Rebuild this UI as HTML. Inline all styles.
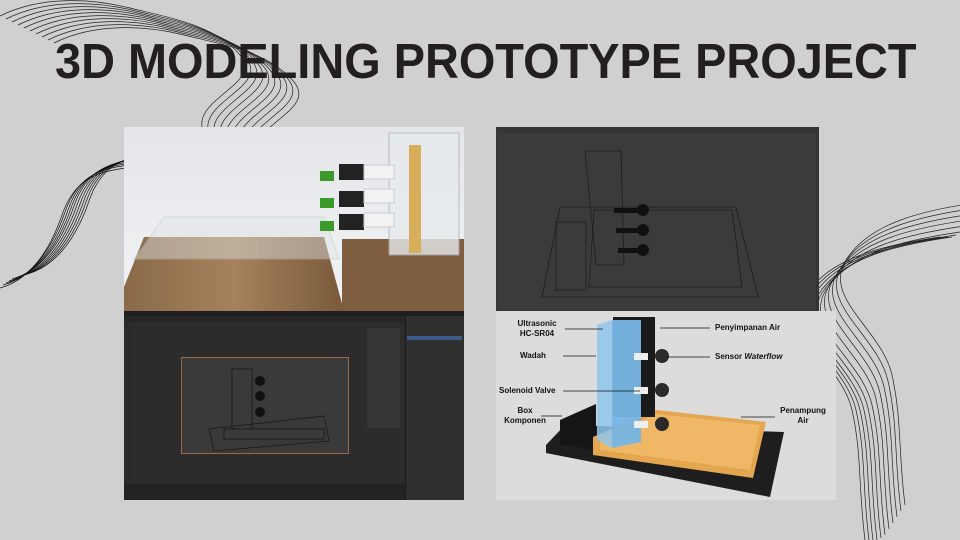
<!DOCTYPE html>
<html><head><meta charset="utf-8"><style>
body{margin:0;width:960px;height:540px;overflow:hidden;background:#d0d0d0;position:relative;font-family:"Liberation Sans",sans-serif}
.abs{position:absolute}
h1{position:absolute;left:55px;top:36px;margin:0;font-size:49px;font-weight:bold;color:#231f20;letter-spacing:0;white-space:nowrap;line-height:52px;transform:scaleX(0.957);transform-origin:0 0}
.lbl{position:absolute;font-size:8px;font-weight:bold;color:#111;text-align:center;line-height:10px;white-space:nowrap}
</style></head><body>
<svg class="abs" style="left:0;top:0" width="960" height="540">
<defs>
<path id="a" d="M0,16 C40,-4 90,-2 130,8 S215,25 240,55 S185,100 205,135" fill="none" stroke="#222" stroke-width="0.7"/>
<path id="b" d="M0,288 C30,280 50,250 62,215 S95,172 126,168" fill="none" stroke="#111" stroke-width="0.7"/>
<path id="c" d="M960,232 C905,240 850,252 826,290 S862,360 872,405 S878,480 885,535" fill="none" stroke="#222" stroke-width="0.7"/>
</defs>
<g><use href="#a"/><use href="#a" x="6" y="3"/><use href="#a" x="12" y="6"/><use href="#a" x="18" y="9"/><use href="#a" x="24" y="12"/><use href="#a" x="30" y="15"/><use href="#a" x="36" y="18"/><use href="#a" x="42" y="21"/><use href="#a" x="48" y="24"/><use href="#a" x="54" y="27"/></g>
<g><use href="#b"/><use href="#b" x="3" y="-3"/><use href="#b" x="6" y="-5"/><use href="#b" x="9" y="-7"/><use href="#b" x="12" y="-9"/><use href="#b" x="15" y="-10"/><use href="#b" x="18" y="-11"/><use href="#b" x="21" y="-12"/><use href="#b" x="24" y="-13"/><use href="#b" x="27" y="-14"/></g>
<g><use href="#c"/><use href="#c" x="-4" y="3"/><use href="#c" x="-8" y="5"/><use href="#c" x="-12" y="5"/><use href="#c" x="-16" y="5"/><use href="#c" x="4" y="-6"/><use href="#c" x="8" y="-12"/><use href="#c" x="12" y="-18"/><use href="#c" x="16" y="-24"/><use href="#c" x="20" y="-30"/><use href="#c" x="-20" y="5"/></g>
</svg>
<h1>3D MODELING PROTOTYPE PROJECT</h1>

<svg class="abs" style="left:124px;top:127px" width="340" height="184">
<defs><linearGradient id="wall" x1="0" y1="0" x2="0" y2="1"><stop offset="0" stop-color="#e4e6ea"/><stop offset="1" stop-color="#f2f3f5"/></linearGradient>
<linearGradient id="wood" x1="0" y1="0" x2="1" y2="0"><stop offset="0" stop-color="#8a6a48"/><stop offset=".5" stop-color="#a5825c"/><stop offset="1" stop-color="#7a5a3a"/></linearGradient></defs>
<rect width="340" height="184" fill="url(#wall)"/>
<polygon points="0,160 20,110 200,110 220,184 0,184" fill="url(#wood)"/>
<rect x="218" y="112" width="122" height="72" fill="#7e5e3e"/>
<polygon points="10,132 40,90 200,90 215,132" fill="#dfe4e6" opacity=".45" stroke="#b8c0c4"/>
<rect x="265" y="6" width="70" height="122" fill="#e6ebee" opacity=".8" stroke="#aab" />
<rect x="285" y="18" width="12" height="108" fill="#d8ae5a"/>
<g fill="#222"><rect x="215" y="37" width="25" height="16"/><rect x="215" y="64" width="25" height="16"/><rect x="215" y="87" width="25" height="16"/></g>
<g fill="#3a9a2a"><rect x="196" y="44" width="14" height="10"/><rect x="196" y="71" width="14" height="10"/><rect x="196" y="94" width="14" height="10"/></g>
<g fill="#f2f2f2" stroke="#ccc"><rect x="240" y="38" width="30" height="14"/><rect x="240" y="62" width="30" height="14"/><rect x="240" y="86" width="30" height="14"/></g>
</svg>

<div class="abs" style="left:124px;top:311px;width:340px;height:189px;background:#2c2c2c;overflow:hidden">
 <div class="abs" style="left:0;top:0;width:340px;height:5px;background:#1e1e1e"></div>
 <div class="abs" style="left:0;top:5px;width:340px;height:6px;background:#262626"></div>
 <div class="abs" style="left:0;top:11px;width:8px;height:160px;background:#2a2a2a"></div>
 <div class="abs" style="left:57px;top:46px;width:166px;height:95px;background:#3a3a3a;border:1px solid #9a6a48"></div>
 <div class="abs" style="left:243px;top:17px;width:33px;height:100px;background:#353535"></div>
 <div class="abs" style="left:281px;top:5px;width:59px;height:184px;background:#2f2f2f;border-left:1px solid #1a1a1a"></div>
 <div class="abs" style="left:283px;top:25px;width:55px;height:4px;background:#3a5a8a"></div>
 <div class="abs" style="left:0;top:173px;width:281px;height:16px;background:#232323"></div>
 <svg class="abs" style="left:0;top:0" width="281" height="189"><g stroke="#1a1a1a" fill="none" stroke-width=".8"><rect x="108" y="58" width="20" height="60"/><rect x="100" y="118" width="100" height="10"/><polygon points="85,118 200,105 205,130 90,140"/></g><g fill="#111"><circle cx="136" cy="70" r="5"/><circle cx="136" cy="85" r="5"/><circle cx="136" cy="101" r="5"/></g></svg>
</div>

<div class="abs" style="left:496px;top:127px;width:323px;height:184px;background:#353535">
 <div class="abs" style="left:1px;top:6px;width:319px;height:177px;background:#3b3b3b"></div>
 <svg class="abs" style="left:0;top:0" width="323" height="184"><g stroke="#1e1e1e" fill="none" stroke-width=".8">
 <polygon points="89,24 125,24 128,138 100,138"/><polygon points="64,80 240,80 262,170 46,170"/><polygon points="98,83 236,83 246,160 93,160"/><rect x="60" y="95" width="30" height="68"/></g>
 <g fill="#111"><circle cx="147" cy="83" r="6"/><circle cx="147" cy="103" r="6"/><circle cx="147" cy="123" r="6"/><rect x="118" y="81" width="30" height="5"/><rect x="120" y="101" width="28" height="5"/><rect x="122" y="121" width="26" height="5"/></g></svg>
</div>

<div class="abs" style="left:496px;top:311px;width:340px;height:189px;background:#dcdcdc"></div>
<svg class="abs" style="left:0;top:0" width="960" height="540">
 <polygon points="546,445 565,425 784,432 770,497 546,453" fill="#1e1e1e"/>
 <polygon points="560,420 596,404 596,450 560,444" fill="#151515"/>
 <polygon points="593,437 656,410 766,422 753,478 593,455" fill="#e4a64e"/>
 <polygon points="600,440 656,414 760,425 750,470 600,450" fill="#f0b866"/>
 <rect x="613" y="317" width="42" height="100" fill="#1a1a1a"/>
 <polygon points="597,325 612,320 641,320 641,442 612,448 597,440" fill="#8fc6ec" opacity=".85"/>
 <polygon points="612,320 641,320 641,442 612,448" fill="#6fb0e0" opacity=".7"/>
 <g fill="#2a2a2a"><circle cx="662" cy="356" r="7"/><circle cx="662" cy="390" r="7"/><circle cx="662" cy="424" r="7"/></g>
 <g fill="#eee"><rect x="634" y="353" width="14" height="7"/><rect x="634" y="387" width="14" height="7"/><rect x="634" y="421" width="14" height="7"/></g>
 <g stroke="#111" stroke-width=".8"><line x1="565" y1="329" x2="603" y2="329"/><line x1="660" y1="328" x2="710" y2="328"/><line x1="563" y1="356" x2="596" y2="356"/><line x1="667" y1="357" x2="710" y2="357"/><line x1="563" y1="391" x2="640" y2="391"/><line x1="541" y1="416" x2="562" y2="416"/><line x1="741" y1="417" x2="775" y2="417"/></g>
</svg>
<div class="lbl" style="left:512px;top:319px;width:50px">Ultrasonic<br>HC-SR04</div>
<div class="lbl" style="left:520px;top:351px">Wadah</div>
<div class="lbl" style="left:499px;top:386px">Solenoid Valve</div>
<div class="lbl" style="left:500px;top:406px;width:50px">Box<br>Komponen</div>
<div class="lbl" style="left:715px;top:323px">Penyimpanan Air</div>
<div class="lbl" style="left:715px;top:352px">Sensor <i>Waterflow</i></div>
<div class="lbl" style="left:778px;top:406px;width:50px">Penampung<br>Air</div>
</body></html>
